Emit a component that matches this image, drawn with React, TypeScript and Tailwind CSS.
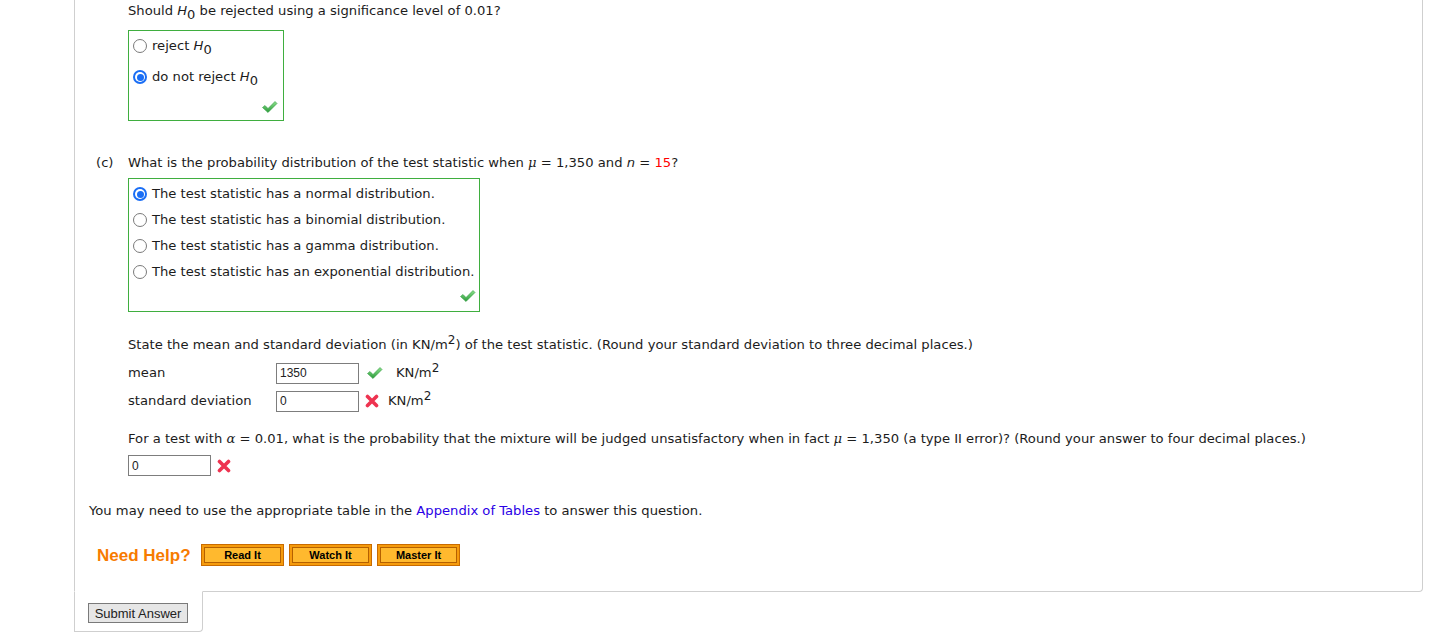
import React from 'react';

const font = "font-['DejaVu_Sans',Verdana,sans-serif]";

const H0 = () => (
    <span className="whitespace-nowrap">
        <i>H</i>
        <sub className="relative top-[4px] text-[13px] leading-none align-baseline">0</sub>
    </span>
);

const Radio: React.FC<{ checked?: boolean }> = ({ checked }) =>
    checked ? (
        <span className="flex h-[14px] w-[14px] shrink-0 items-center justify-center rounded-full bg-[#1a6ef5]">
            <span className="flex h-[10px] w-[10px] items-center justify-center rounded-full bg-white">
                <span className="h-[7px] w-[7px] rounded-full bg-[#1a6ef5]" />
            </span>
        </span>
    ) : (
        <span className="h-[14px] w-[14px] shrink-0 rounded-full border border-[#7a7a7a] bg-white" />
    );

const Check = () => (
    <svg width="17" height="14" viewBox="0 0 17 14" className="shrink-0">
        <defs>
            <linearGradient id="ck" x1="0" y1="0" x2="0" y2="1">
                <stop offset="0" stopColor="#8be08b" />
                <stop offset="1" stopColor="#2b9a3a" />
            </linearGradient>
        </defs>
        <path d="M1.5 7.5 L4 5.5 L7 8.5 L14 1.5 L16 3.5 L7 12.5 Z" fill="url(#ck)" stroke="#2f9c3e" strokeWidth="0.6" strokeLinejoin="round" />
    </svg>
);

const Cross = () => (
    <svg width="14" height="14" viewBox="0 0 14 14" className="shrink-0">
        <path d="M2.5 2.5 L11.5 11.5 M11.5 2.5 L2.5 11.5" stroke="#ee3350" strokeWidth="3.6" strokeLinecap="round" />
    </svg>
);

const Answer: React.FC<{ value: string }> = ({ value }) => (
    <div className="flex h-[21px] w-[83px] items-center border border-[#7d7d7d] bg-white pl-[3px] font-['Liberation_Sans',Arial,sans-serif] text-[12px] text-[#222]">
        {value}
    </div>
);

const HelpButton: React.FC<{ label: string }> = ({ label }) => (
    <button className="h-[22px] w-[83px] border border-[#c96b00] bg-[#f59b0c] p-[2px]">
        <span className="flex h-full w-full items-center justify-center border border-[#b56000] bg-[#ffb92e] font-['Liberation_Sans',Arial,sans-serif] text-[11px] font-bold leading-none text-black">
            {label}
        </span>
    </button>
);

const Unit = () => (
    <span>
        KN/m<sup className="relative -top-[5px] text-[12px] leading-none align-baseline">2</sup>
    </span>
);

export default function App() {
    const options = [
        'The test statistic has a normal distribution.',
        'The test statistic has a binomial distribution.',
        'The test statistic has a gamma distribution.',
        'The test statistic has an exponential distribution.',
    ];

    return (
        <div className={`min-h-[638px] bg-white ${font} text-[13.15px] text-[#1c1c1c]`}>
            <div className="ml-[74px] w-[1349px] rounded-br-[4px] border-x border-b border-[#cfcfcf] pb-[25px]">
                <div className="pl-[53px]">
                    <div className="flex h-[21px] items-center">
                        <span>
                            Should <H0 /> be rejected using a significance level of 0.01?
                        </span>
                    </div>

                    <div className="mt-[9px] h-[91px] w-[156px] border border-[#3fae3f] pl-[4px] pt-[2px]">
                        <div className="flex h-[26px] items-center gap-[5px]">
                            <Radio />
                            <span>
                                reject <H0 />
                            </span>
                        </div>
                        <div className="mt-[5px] flex h-[26px] items-center gap-[5px]">
                            <Radio checked />
                            <span>
                                do not reject <H0 />
                            </span>
                        </div>
                        <div className="mt-[10px] flex justify-end pr-[5px]">
                            <Check />
                        </div>
                    </div>
                </div>

                <div className="mt-[31px] flex h-[21px] items-center pl-[21px]">
                    <span className="w-[32px]">(c)</span>
                    <span>
                        What is the probability distribution of the test statistic when{' '}
                        <i className="font-['DejaVu_Serif',serif]">μ</i> = 1,350 and <i>n</i> ={' '}
                        <span className="text-[#ff0000]">15</span>?
                    </span>
                </div>

                <div className="pl-[53px]">
                    <div className="mt-[5px] h-[134px] w-[352px] border border-[#3fae3f] pl-[4px] pt-[2px]">
                        {options.map((o, i) => (
                            <div key={o} className="flex h-[26px] items-center gap-[5px]">
                                <Radio checked={i === 0} />
                                <span>{o}</span>
                            </div>
                        ))}
                        <div className="mt-[4px] flex justify-end pr-[3px]">
                            <Check />
                        </div>
                    </div>

                    <div className="mt-[22px] flex h-[21px] items-center">
                        <span>
                            State the mean and standard deviation (in <Unit />) of the test statistic. (Round your
                            standard deviation to three decimal places.)
                        </span>
                    </div>

                    <div className="mt-[7px] flex h-[22px] items-center">
                        <span className="w-[148px]">mean</span>
                        <Answer value="1350" />
                        <span className="ml-[7px]">
                            <Check />
                        </span>
                        <span className="ml-[13px]">
                            <Unit />
                        </span>
                    </div>
                    <div className="mt-[6px] flex h-[22px] items-center">
                        <span className="w-[148px]">standard deviation</span>
                        <Answer value="0" />
                        <span className="ml-[6px]">
                            <Cross />
                        </span>
                        <span className="ml-[9px]">
                            <Unit />
                        </span>
                    </div>

                    <div className="mt-[16px] flex h-[21px] items-center">
                        <span>
                            For a test with <i className="font-['DejaVu_Serif',serif]">α</i> = 0.01, what is the
                            probability that the mixture will be judged unsatisfactory when in fact{' '}
                            <i className="font-['DejaVu_Serif',serif]">μ</i> = 1,350 (a type II error)? (Round your
                            answer to four decimal places.)
                        </span>
                    </div>
                    <div className="mt-[6px] flex items-center">
                        <Answer value="0" />
                        <span className="ml-[6px]">
                            <Cross />
                        </span>
                    </div>
                </div>

                <div className="mt-[24px] flex h-[21px] items-center pl-[14px]">
                    <span>
                        You may need to use the appropriate table in the{' '}
                        <a className="text-[#2a00e6]">Appendix of Tables</a> to answer this question.
                    </span>
                </div>

                <div className="mt-[23px] flex h-[22px] items-center pl-[22px]">
                    <span className="w-[104px] font-['Liberation_Sans',Arial,sans-serif] text-[17px] font-bold leading-none text-[#f77b00]">
                        Need Help?
                    </span>
                    <div className="flex gap-[5px]">
                        <HelpButton label="Read It" />
                        <HelpButton label="Watch It" />
                        <HelpButton label="Master It" />
                    </div>
                </div>
            </div>

            <div className="-mt-px ml-[74px] h-[41px] w-[129px] rounded-br-[4px] border-x border-b border-t border-[#cfcfcf] border-t-white bg-white pl-[13px] pt-[11px]">
                <button className="h-[20px] w-[100px] border border-[#7a7a7a] bg-[#e6e6e6] font-['Liberation_Sans',Arial,sans-serif] text-[13px] leading-none text-[#222]">
                    Submit Answer
                </button>
            </div>
        </div>
    );
}
